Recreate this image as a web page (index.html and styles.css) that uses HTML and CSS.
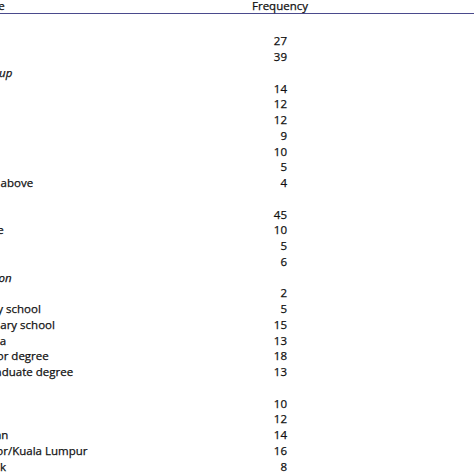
FILE: index.html
```html
<!DOCTYPE html>
<html>
<head>
<meta charset="utf-8">
<link rel="stylesheet" href="styles.css">
</head>
<body>
<div class="table">
  <div class="head">
    <div class="label">Variable</div>
    <div class="freq-head">Frequency</div>
  </div>
  <div class="rows">
    <div class="row"><div class="label cat">Gender</div><div class="num"></div></div>
    <div class="row"><div class="label">Male</div><div class="num">27</div></div>
    <div class="row"><div class="label">Female</div><div class="num">39</div></div>
    <div class="row"><div class="label cat">Age group</div><div class="num"></div></div>
    <div class="row"><div class="label">20–29</div><div class="num">14</div></div>
    <div class="row"><div class="label">30–39</div><div class="num">12</div></div>
    <div class="row"><div class="label">40–49</div><div class="num">12</div></div>
    <div class="row"><div class="label">50–54</div><div class="num">9</div></div>
    <div class="row"><div class="label">55–59</div><div class="num">10</div></div>
    <div class="row"><div class="label">60–64</div><div class="num">5</div></div>
    <div class="row"><div class="label">65 and above</div><div class="num">4</div></div>
    <div class="row"><div class="label cat">Race</div><div class="num"></div></div>
    <div class="row"><div class="label">Malay</div><div class="num">45</div></div>
    <div class="row"><div class="label">Chinese</div><div class="num">10</div></div>
    <div class="row"><div class="label">Indian</div><div class="num">5</div></div>
    <div class="row"><div class="label">Others</div><div class="num">6</div></div>
    <div class="row"><div class="label cat">Education</div><div class="num"></div></div>
    <div class="row"><div class="label">None</div><div class="num">2</div></div>
    <div class="row"><div class="label">Primary school</div><div class="num">5</div></div>
    <div class="row"><div class="label">Secondary school</div><div class="num">15</div></div>
    <div class="row"><div class="label">Diploma</div><div class="num">13</div></div>
    <div class="row"><div class="label">Bachelor degree</div><div class="num">18</div></div>
    <div class="row"><div class="label">Postgraduate degree</div><div class="num">13</div></div>
    <div class="row"><div class="label cat">State</div><div class="num"></div></div>
    <div class="row"><div class="label">Johor</div><div class="num">10</div></div>
    <div class="row"><div class="label">Kedah</div><div class="num">12</div></div>
    <div class="row"><div class="label">Kelantan</div><div class="num">14</div></div>
    <div class="row"><div class="label">Selangor/Kuala Lumpur</div><div class="num">16</div></div>
    <div class="row"><div class="label">Sarawak</div><div class="num">8</div></div>
  </div>
</div>
</body>
</html>
```
FILE: styles.css
```css
html, body {
  margin: 0;
  padding: 0;
  background: #ffffff;
  overflow: hidden;
  width: 474px;
  height: 474px;
}
.table {
  width: 600px;
  margin-left: -39px;
  font-family: "Open Sans", "Noto Sans", sans-serif;
  font-size: 11.5px;
  color: #111111;
  -webkit-text-stroke: 0.25px #111111;
}
.head {
  display: flex;
  height: 13px;
  line-height: 12px;
  border-bottom: 1.5px solid #4a4a8c;
}
.head .label {
  width: 279px;
  flex: none;
}
.freq-head {
  width: 80px;
  flex: none;
  text-align: center;
}
.rows {
  padding-top: 3.5px;
  display: flex;
  flex-direction: column;
}
.row {
  display: flex;
  height: 15.75px;
  line-height: 15.75px;
}
.row .label {
  width: 279px;
  flex: none;
  white-space: nowrap;
}
.cat {
  font-style: italic;
}
.num {
  width: 47px;
  flex: none;
  text-align: right;
}
```
